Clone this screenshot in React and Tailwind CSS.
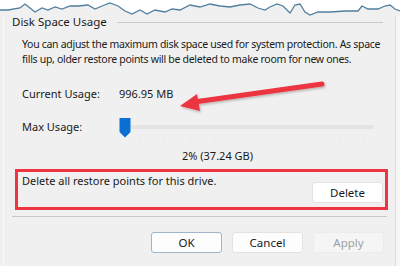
import React from "react";

const wave =
  "0,10 8,10 20,8 25,4 30,8 35,12 42,8 48,10 55,7 62,9 70,6 78,6 88,5 95,9 102,6 110,3 118,6 125,11 132,14 140,10 147,14 155,10 165,12 172,9 180,10 190,5 200,7 210,4 220,6 230,7 240,5 250,4 258,8 265,10 270,7 277,4 283,6 290,13 295,5 300,4 305,12 310,15 318,12 330,12 345,11 358,11 362,6 368,9 378,9 385,6 390,5 395,9 400,11";

const TornEdge = () => (
  <div className="h-[16px] w-[400px] shrink-0 bg-white">
    <svg width="400" height="16" viewBox="0 0 400 16" className="block">
      <polygon points={wave + " 400,16 0,16"} fill="#f0f0f0" />
      <polyline points={wave} fill="none" stroke="#4f7f9f" strokeWidth="1.3" />
    </svg>
  </div>
);

const Button = ({ label, primary, disabled, className }) => (
  <div
    className={
      "h-[21px] w-[71px] flex items-center justify-center rounded-[3px] text-[11.5px] border " +
      (primary
        ? "bg-[#fdfdfd] border-[#9fb5c8] text-[#1a1a1a] "
        : disabled
        ? "bg-[#f5f5f5] border-[#ececec] text-[#a0a0a0] "
        : "bg-[#fdfdfd] border-[#e3e3e3] text-[#1a1a1a] ") +
      (className || "")
    }
  >
    {label}
  </div>
);

const Slider = () => (
  <div className="relative w-[258px] h-[26px]">
    <div className="absolute left-[10px] right-[2px] top-[8px] h-[4px] bg-[#e4e4e4]" />
    <svg className="absolute left-0 top-0" width="14" height="22" viewBox="0 0 14 22">
      <path d="M1.5 1 H12.5 V15 L7 20.5 L1.5 15 Z" fill="#0a6fd1" />
    </svg>
    {[22, 46, 72, 96, 222, 246].map((x) => (
      <div key={x} className="absolute top-[21px] w-px h-[2px] bg-[#e0e0e0]" style={{ left: x }} />
    ))}
  </div>
);

export default function App() {
  return (
    <div
      className="w-[400px] h-[266px] bg-white overflow-hidden flex flex-col text-[#1a1a1a]"
      style={{ fontFamily: '"Noto Sans", "Open Sans", sans-serif' }}
    >
      <TornEdge />
      <div className="flex-1 flex bg-[#f0f0f0] min-h-0">
        <div className="flex-1 min-w-0 border-l border-[#f8f8f8] ml-[3px] border-r-[1px] border-r-[#dcdcdc] pr-[4px] flex flex-col relative">
          <div className="flex items-center pl-[8px] pr-[8px] h-[14px] mt-[-1px] shrink-0">
            <span className="text-[11.5px] leading-none">Disk Space Usage</span>
            <div className="flex-1 h-px bg-[#c8c8c8] ml-[10px]" />
          </div>

          <p className="pl-[18px] mt-[8px] text-[10.5px] leading-[15px] tracking-[-0.3px] whitespace-nowrap shrink-0">
            You can adjust the maximum disk space used for system protection. As space
            <br />
            fills up, older restore points will be deleted to make room for new ones.
          </p>

          <div className="flex items-center pl-[18px] mt-[19px] text-[11px] h-[16px] shrink-0">
            <span className="w-[97px]">Current Usage:</span>
            <span>996.95 MB</span>
          </div>

          <div className="flex items-start pl-[18px] mt-[15px] text-[11px] shrink-0">
            <span className="w-[96px] mt-[2px]">Max Usage:</span>
            <Slider />
          </div>

          <div className="text-center text-[11px] pl-[40px] mt-[5px] h-[16px] shrink-0">2% (37.24 GB)</div>

          <div className="ml-[11px] mr-[3px] mt-[5px] h-[41px] border-[3px] border-[#ec3540] flex justify-between pl-[4px] pr-[2px] shrink-0">
            <span className="text-[11px] mt-[1px]">Delete all restore points for this drive.</span>
            <Button label="Delete" className="mt-[10px] bg-white" />
          </div>

          <div className="ml-[8px] mr-[4px] mt-[6px] h-px bg-[#c8c8c8] shrink-0" />

          <div className="flex justify-end gap-[10px] pr-[7px] mt-[15px] shrink-0">
            <Button label="OK" primary />
            <Button label="Cancel" />
            <Button label="Apply" disabled />
          </div>

          <svg className="absolute left-0 top-0 pointer-events-none" width="393" height="250" viewBox="0 0 393 250">
            <defs>
              <filter id="sh" x="-10%" y="-50%" width="120%" height="200%">
                <feDropShadow dx="1" dy="1.5" stdDeviation="1" floodColor="#000" floodOpacity="0.25" />
              </filter>
            </defs>
            <g filter="url(#sh)">
              <line x1="318" y1="68" x2="190" y2="86" stroke="#ec3540" strokeWidth="5" strokeLinecap="round" />
              <polygon points="176,90 193,78 196,95" fill="#ec3540" />
            </g>
          </svg>
        </div>
        <div className="w-[4px] bg-[#f7f7f7]" />
      </div>
    </div>
  );
}
